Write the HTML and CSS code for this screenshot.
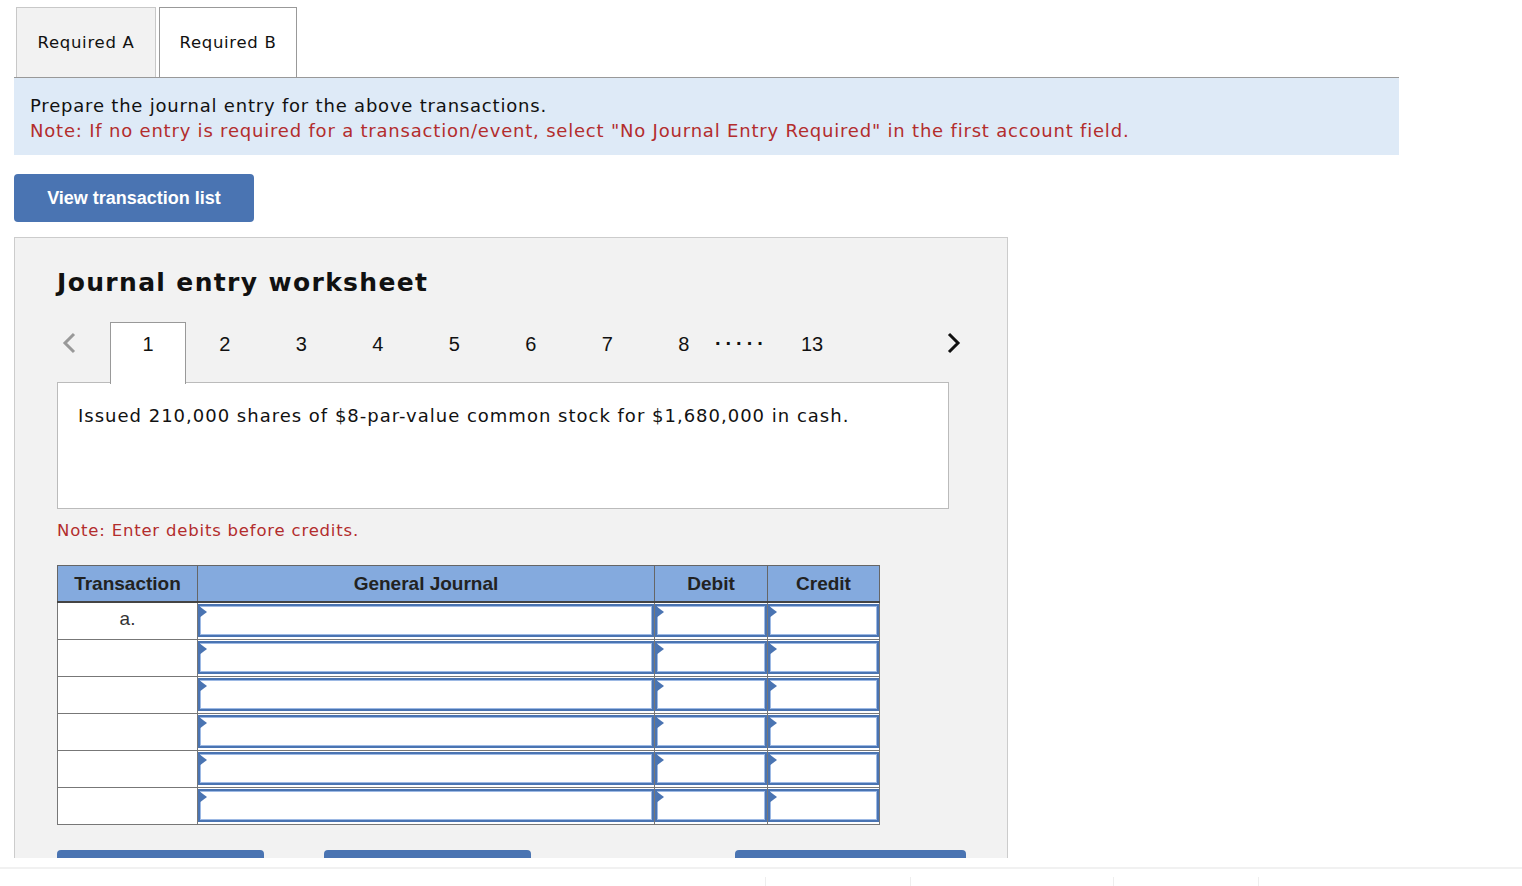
FILE: index.html
```html
<!DOCTYPE html>
<html lang="en">
<head>
    <meta charset="UTF-8">
    <title>Journal entry worksheet</title>
    <link rel="stylesheet" href="styles.css">
</head>
<body>

<div class="frame">
    <div class="page">
        <div class="tabs">
            <div class="tab">Required A</div>
            <div class="tab active">Required B</div>
        </div>
        <div class="instructions">
            <div>Prepare the journal entry for the above transactions.</div>
            <div class="red">Note: If no entry is required for a transaction/event, select "No Journal Entry Required" in the first account field.</div>
        </div>
        <button class="btn-list">View transaction list</button>

        <div class="panel">
            <h2>Journal entry worksheet</h2>
            <div class="pager">
                <span class="arrow prev">
                    <svg width="16" height="22" viewBox="0 0 16 22"><polyline points="13,2 4,11 13,20" fill="none" stroke="#999" stroke-width="3"/></svg>
                </span>
                <div class="page-item current">1</div>
                <div class="page-item">2</div>
                <div class="page-item">3</div>
                <div class="page-item">4</div>
                <div class="page-item">5</div>
                <div class="page-item">6</div>
                <div class="page-item">7</div>
                <div class="page-item">8</div>
                <div class="dots">.....</div>
                <div class="page-item last">13</div>
                <span class="arrow next">
                    <svg width="16" height="22" viewBox="0 0 16 22"><polyline points="3,2 12,11 3,20" fill="none" stroke="#111" stroke-width="3"/></svg>
                </span>
            </div>
            <div class="question">Issued 210,000 shares of $8-par-value common stock for $1,680,000 in cash.</div>
            <p class="note">Note: Enter debits before credits.</p>

            <table class="journal">
                <colgroup>
                    <col style="width: 140px">
                    <col style="width: 457px">
                    <col style="width: 113px">
                    <col style="width: 112px">
                </colgroup>
                <thead>
                    <tr>
                        <th>Transaction</th>
                        <th>General Journal</th>
                        <th>Debit</th>
                        <th>Credit</th>
                    </tr>
                </thead>
                <tbody id="rows"></tbody>
            </table>

            <div class="actions">
                <div class="action"></div>
                <div class="action"></div>
                <div class="action wide"></div>
            </div>
        </div>
    </div>
</div>

<div class="footer">
    <span class="tick" style="left: 765px"></span>
    <span class="tick" style="left: 910px"></span>
    <span class="tick" style="left: 1113px"></span>
    <span class="tick" style="left: 1258px"></span>
</div>

<script>
    const rows = document.getElementById('rows');
    for (let i = 0; i < 6; i++) {
        const tr = document.createElement('tr');
        tr.innerHTML = '<td class="col-tr">' + (i === 0 ? 'a.' : '') + '</td>' +
            '<td><div class="field"></div></td>' +
            '<td><div class="field"></div></td>' +
            '<td><div class="field"></div></td>';
        rows.appendChild(tr);
    }
</script>

</body>
</html>
```

FILE: styles.css
```css
body {
    margin: 0;
    font-family: "DejaVu Sans", Verdana, sans-serif;
    color: #111;
    background: #fff;
}
.frame {
    height: 858px;
    overflow: hidden;
}
.page {
    padding-left: 14px;
    width: 1385px;
}
.tabs {
    display: flex;
    gap: 3px;
    padding-top: 7px;
    padding-left: 2px;
    border-bottom: 1px solid #999;
}
.tab {
    width: 138px;
    height: 69px;
    line-height: 69px;
    text-align: center;
    font-size: 16.5px;
    letter-spacing: 0.7px;
    background: #f2f2f2;
    border: 1px solid #c8c8c8;
    border-bottom: none;
}
.tab.active {
    width: 136px;
    background: #fff;
    border-color: #999;
}
.instructions {
    background: #deeaf7;
    height: 77px;
    box-sizing: border-box;
    padding: 15px 16px 0;
    font-size: 18px;
    letter-spacing: 0.8px;
    line-height: 25px;
}
.red {
    color: #b32d2d;
}
.btn-list {
    display: block;
    margin-top: 19px;
    width: 240px;
    height: 48px;
    border: none;
    border-radius: 4px;
    background: #4a74b2;
    color: #fff;
    font-family: "Liberation Sans", Arial, sans-serif;
    font-weight: bold;
    font-size: 18px;
    padding: 0;
}
.panel {
    margin-top: 15px;
    width: 994px;
    box-sizing: border-box;
    background: #f2f2f2;
    border: 1px solid #ccc;
    padding: 27px 42px 0 42px;
    height: 700px;
}
.panel h2 {
    margin: 0;
    font-size: 25px;
    letter-spacing: 1.35px;
    line-height: 36px;
    font-weight: bold;
    color: #111;
}
.pager {
    display: flex;
    align-items: flex-start;
    margin-top: 21px;
    width: 909px;
    height: 61px;
    font-family: "Liberation Sans", Arial, sans-serif;
    font-size: 20px;
    position: relative;
    z-index: 1;
}
.arrow {
    padding-top: 10px;
}
.arrow.prev {
    margin-left: 4px;
    width: 49px;
}
.arrow.next {
    margin-left: auto;
    margin-right: 4px;
}
.page-item {
    width: 76.5px;
    text-align: center;
    padding-top: 11px;
    height: 50px;
    color: #111;
}
.page-item.current {
    box-sizing: border-box;
    width: 76px;
    height: 62px;
    background: #fff;
    border: 1px solid #999;
    border-bottom: none;
    padding-top: 10px;
    margin-right: 0.5px;
}
.page-item.last {
    width: 94px;
}
.dots {
    margin-left: -7px;
    width: 50px;
    padding-top: 5px;
    font-weight: bold;
    font-size: 20px;
    letter-spacing: 5px;
}
.question {
    background: #fff;
    border: 1px solid #bbb;
    width: 892px;
    height: 127px;
    box-sizing: border-box;
    padding: 20px 20px 0;
    font-size: 18px;
    letter-spacing: 1px;
    line-height: 26px;
    margin-top: -1px;
}
.note {
    margin: 11px 0 0;
    font-size: 16.5px;
    letter-spacing: 0.8px;
    line-height: 22px;
    color: #b32d2d;
}
.journal {
    margin-top: 23px;
    border-collapse: collapse;
    width: 822px;
    table-layout: fixed;
    font-family: "Liberation Sans", Arial, sans-serif;
}
.journal th {
    background: #84aade;
    border: 1px solid #666;
    border-bottom: 2px solid #444;
    height: 35px;
    font-size: 19px;
    font-weight: bold;
    color: #222;
    padding: 0;
}
.journal td {
    background: #fff;
    border: 1px solid #777;
    height: 37px;
    padding: 0;
    box-sizing: border-box;
}
.journal td.col-tr {
    text-align: center;
    font-size: 19px;
    color: #333;
    vertical-align: top;
    padding-top: 5px;
}
.field {
    position: relative;
    height: 33px;
    margin: 0 0 1px;
    border: 2px solid #4a74b2;
    box-shadow: inset 0 0 0 1px #9db9e4;
    box-sizing: border-box;
    background: #fff;
}
.field::before {
    content: "";
    position: absolute;
    left: -1px;
    top: 0;
    border-top: 6px solid transparent;
    border-bottom: 6px solid transparent;
    border-left: 8px solid #4a74b2;
}
.actions {
    display: flex;
    gap: 60px;
    margin-top: 25px;
    width: 909px;
}
.action {
    width: 207px;
    height: 34px;
    background: #4a74b2;
    border-radius: 4px 4px 0 0;
}
.action.wide {
    width: 231px;
    margin-left: auto;
}
.footer {
    position: relative;
    margin-top: 9px;
    border-top: 2px solid #f1f1f1;
    height: 19px;
}
.tick {
    position: absolute;
    top: 8px;
    width: 1px;
    height: 12px;
    background: #eee;
}
```
